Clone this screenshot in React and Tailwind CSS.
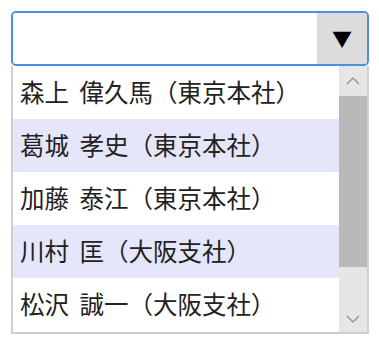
import React from 'react';

const staff = [
  ['森上 偉久馬', '（東京本社）'],
  ['葛城 孝史', '（東京本社）'],
  ['加藤 泰江', '（東京本社）'],
  ['川村 匡', '（大阪支社）'],
  ['松沢 誠一', '（大阪支社）'],
];

export default function App() {
  return (
    <div className="w-[379px] h-[345px] bg-white pt-[11px] pl-[11px] font-['Noto_Sans_CJK_JP',sans-serif]">
      {/* combo input */}
      <div className="flex w-[358px] h-[55px] border-2 border-[#4a90dc] rounded-[5px] overflow-hidden">
        <div className="flex-1 bg-white"></div>
        <button className="w-[50px] bg-[#dcdcdc] flex items-center justify-center text-[20px] leading-none text-black">
          ▼
        </button>
      </div>

      {/* dropdown list */}
      <div className="flex w-[358px] h-[268px] border-2 border-t-0 border-[#cfcfcf]">
        <div className="flex-1 overflow-hidden">
          {staff.map(([name, branch], i) => (
            <div
              key={i}
              className={`h-[53px] flex items-center pl-[7px] text-[24.5px] leading-none text-[#222] whitespace-nowrap [text-spacing-trim:space-all] [word-spacing:5px] ${
                i % 2 === 1 ? 'bg-[#e6e6fa]' : 'bg-white'
              }`}
            >
              <span>{name}</span>
              <span className="[font-feature-settings:'fwid']">{branch}</span>
            </div>
          ))}
        </div>

        {/* scrollbar */}
        <div className="w-[28px] bg-[#e6e6e6] flex flex-col">
          <div className="h-[30px] flex items-center justify-center">
            <svg width="14" height="8" viewBox="0 0 14 8" fill="none" stroke="#8a8a8a" strokeWidth="1.2">
              <path d="M1 7 L7 1 L13 7" />
            </svg>
          </div>
          <div className="h-[171px] bg-[#b9b9b9]"></div>
          <div className="flex-1 flex items-end justify-center pb-[9px]">
            <svg width="14" height="8" viewBox="0 0 14 8" fill="none" stroke="#8a8a8a" strokeWidth="1.2">
              <path d="M1 1 L7 7 L13 1" />
            </svg>
          </div>
        </div>
      </div>
    </div>
  );
}
